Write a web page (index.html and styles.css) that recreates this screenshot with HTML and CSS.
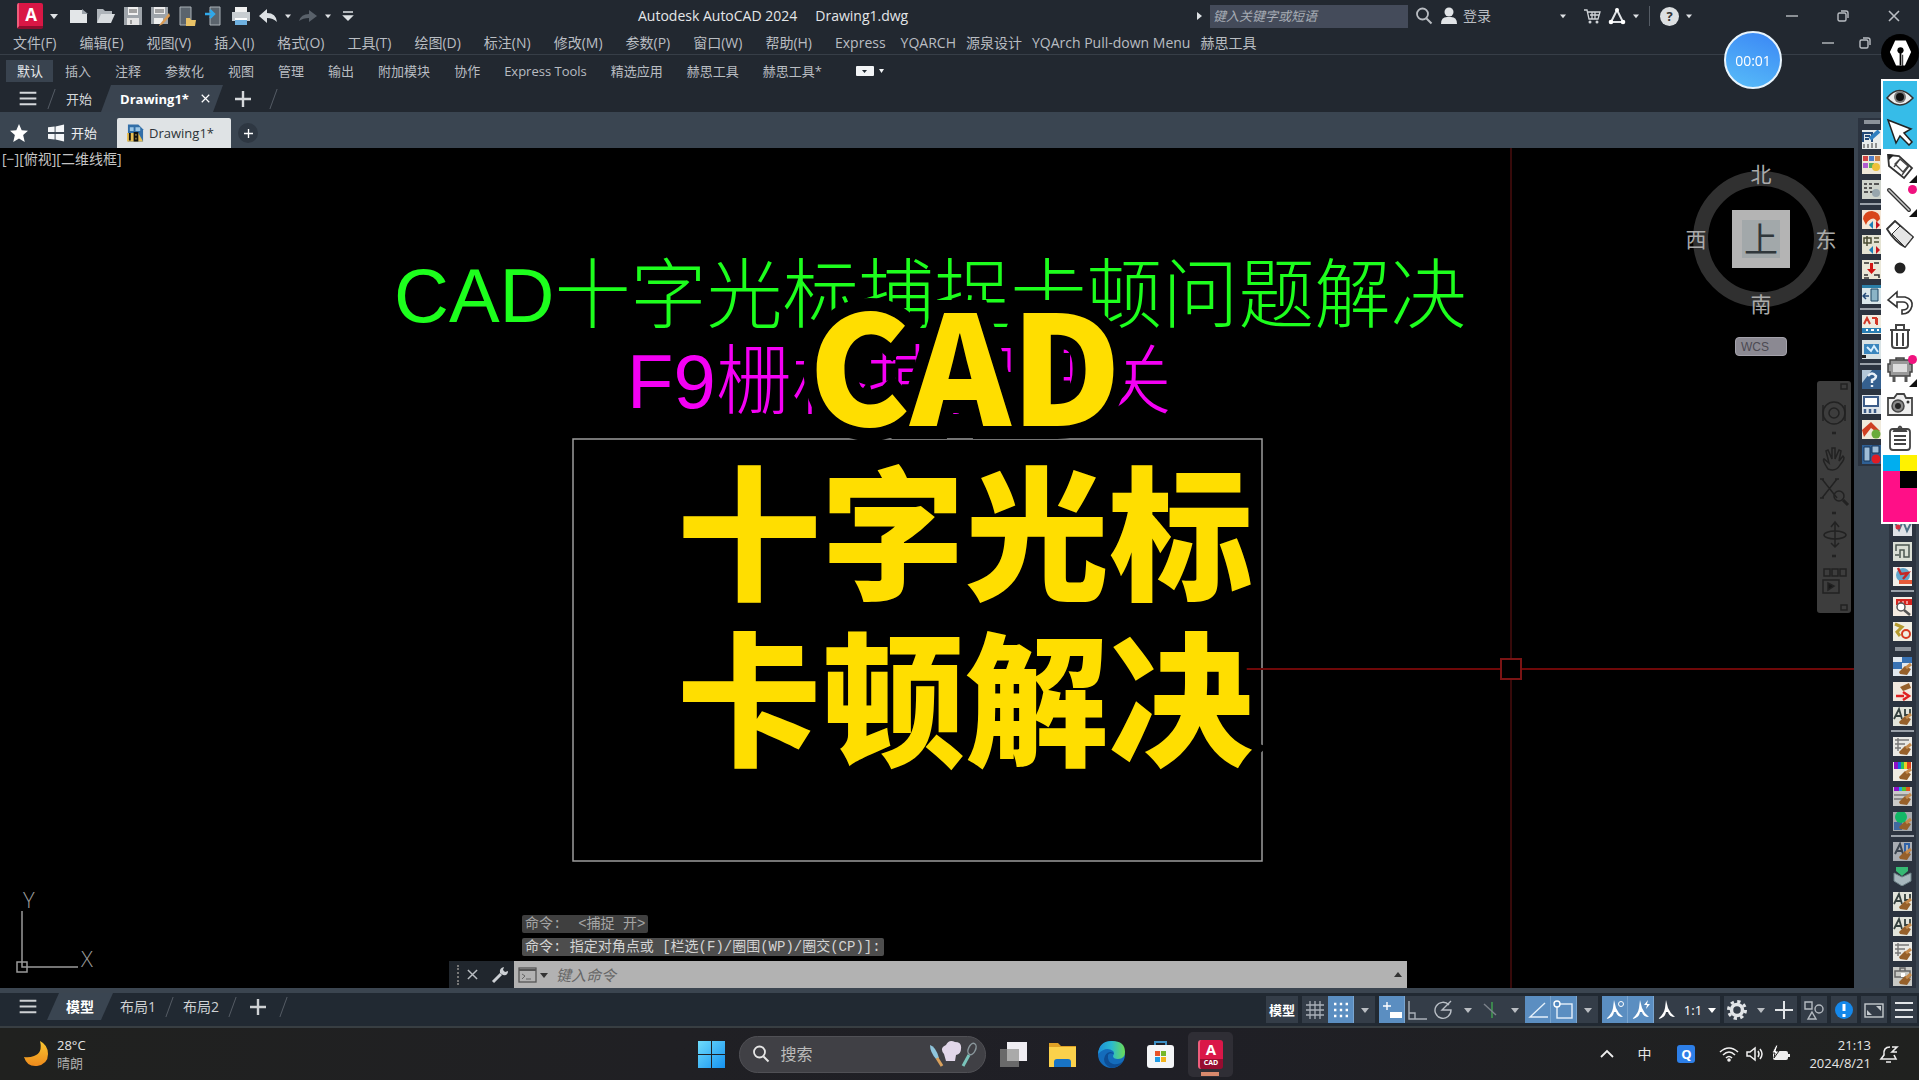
FILE: index.html
```html
<!DOCTYPE html>
<html lang="zh-CN">
<head>
  <meta charset="UTF-8">
  <meta name="viewport" content="width=device-width, initial-scale=1.0">
  <title>Autodesk AutoCAD 2024 - Drawing1.dwg</title>
  <link rel="stylesheet" href="styles.css">
</head>
<body>
  <!-- 图标库 -->
  <svg class="sprite" aria-hidden="true">
    <symbol id="i-down" viewBox="0 0 8 8"><path d="M0 2h8L4 7z" fill="currentColor"/></symbol>
    <symbol id="i-menu" viewBox="0 0 20 18"><path d="M0 2h20M0 9h20M0 16h20" stroke="currentColor" stroke-width="2.4"/></symbol>
    <symbol id="i-plus" viewBox="0 0 16 16"><path d="M8 0v16M0 8h16" stroke="currentColor" stroke-width="2.4"/></symbol>
    <symbol id="i-close" viewBox="0 0 12 12"><path d="M1 1l10 10M11 1L1 11" stroke="currentColor" stroke-width="1.6"/></symbol>
    <symbol id="i-min" viewBox="0 0 12 12"><path d="M0 6h12" stroke="currentColor" stroke-width="1.4"/></symbol>
    <symbol id="i-restore" viewBox="0 0 12 12"><rect x="1" y="3" width="8" height="8" rx="1.5" fill="none" stroke="currentColor" stroke-width="1.4"/><path d="M4 1h5a2 2 0 012 2v5" fill="none" stroke="currentColor" stroke-width="1.4"/></symbol>
    <symbol id="i-search" viewBox="0 0 18 18"><circle cx="7.500" cy="7" r="5.500" fill="none" stroke="currentColor" stroke-width="1.800"/><path d="M11.500 11.500l5 5" stroke="currentColor" stroke-width="2"/></symbol>
    <!-- 右侧工具栏的小图标 -->
    <symbol id="t-edit" viewBox="0 0 19 19"><rect width="19" height="19" fill="#e8ecec"/><path d="M1 12V3h9v9M3 6h5M3 9h4" fill="none" stroke="#244a78" stroke-width="2"/><path d="M8 9L17 1" stroke="#2f7fc0" stroke-width="4"/><path d="M2 14v4M6 14v4M10 13v5M14 13v5" stroke="#333"/></symbol>
    <symbol id="t-palette" viewBox="0 0 19 19"><rect width="19" height="19" fill="#eee8d8"/><path d="M1 1h5v5H1z" fill="#d04646"/><path d="M7 1h5v5H7z" fill="#4b7cc9"/><path d="M13 1h5v5h-5z" fill="#c9824b"/><path d="M1 8h5v5H1z" fill="#b05ccf"/><path d="M7 8h5v5H7z" fill="#59b15c"/><circle cx="14" cy="12" r="4" fill="#edc13a"/></symbol>
    <symbol id="t-table" viewBox="0 0 19 19"><rect width="19" height="19" fill="#cfd4cc"/><path d="M2 4h3M7 4h3M12 4h5M2 8h3M7 8h3M2 12h4M8 12h3" stroke="#555" stroke-width="2"/><circle cx="14" cy="13" r="4" fill="#98a6ad"/></symbol>
    <symbol id="t-face" viewBox="0 0 19 19"><rect width="19" height="19" fill="#f3e6d6"/><path d="M1 9q1-8 9-8 8 1 8 8l-3 3q-2-5-6-3t-5 6z" fill="#d8461b"/><path d="M7 15l4-4v8z" fill="#1d7fb8"/><path d="M18 15l-4-4v8z" fill="#c81420"/></symbol>
    <symbol id="t-swap" viewBox="0 0 19 19"><rect width="19" height="19" fill="#e4e3d3"/><path d="M2 3h7v5H2zM5 1v10M12 3h5M12 7h5" fill="none" stroke="#4a4d35" stroke-width="1.500"/><path d="M7 15l4-4v8z" fill="#1d7fb8"/><path d="M18 15l-4-4v8z" fill="#c81420"/></symbol>
    <symbol id="t-down" viewBox="0 0 19 19"><rect width="19" height="19" fill="#eae7d8"/><path d="M2 3h5M12 3h5M2 15h4M2 18h5M12 15h5v3" stroke="#333" fill="none" stroke-width="1.500"/><path d="M8 3h3v6h3l-4.500 5L5 9h3z" fill="#d21414"/></symbol>
    <symbol id="t-door" viewBox="0 0 19 19"><rect width="19" height="19" fill="#dbe7ea"/><path d="M0 0h19v3H0z" fill="#2a7fa8"/><path d="M9 4h7v12H9z" fill="#8bb4c6" stroke="#1e4763"/><path d="M1 11h6M4 8l-3 3 3 3" fill="none" stroke="#244a78" stroke-width="1.500"/></symbol>
    <symbol id="t-red" viewBox="0 0 19 19"><rect width="19" height="19" fill="#f0ece0"/><path d="M2 9l3-6 3 6M10 3h4v6M15 3v7" fill="none" stroke="#d23a2a" stroke-width="2"/><path d="M0 13h19v5H0z" fill="#2a7fb4"/><path d="M4 15h2M9 15h3M15 15h2" stroke="#fff" stroke-width="2"/></symbol>
    <symbol id="t-pic" viewBox="0 0 19 19"><rect width="19" height="19" fill="#d8e2e4"/><rect x="2" y="4" width="15" height="10" fill="#3a86bd"/><path d="M5 7l4 4 3-5 4 6" stroke="#d8f0ff" fill="none" stroke-width="2"/><path d="M0 15h4v3H0z" fill="#222"/></symbol>
    <symbol id="t-help" viewBox="0 0 19 19"><rect width="19" height="19" fill="#35608f"/><path d="M0 0h10L0 13z" fill="#b3c7d8"/><path d="M6 6q4-5 8 0 0 3-4 4v3M10 15v2" fill="none" stroke="#e8f0f8" stroke-width="2.400"/></symbol>
    <symbol id="t-save" viewBox="0 0 19 19"><rect width="19" height="19" fill="#dfe5ea"/><path d="M2 2h14v9H2z" fill="#fff" stroke="#3d5c88" stroke-width="2"/><path d="M3 14v4M8 14v4M13 14v4" stroke="#3d5c88" stroke-width="2.500"/></symbol>
    <symbol id="t-house" viewBox="0 0 19 19"><rect width="19" height="19" fill="#f0eadb"/><path d="M0 10L9 2l9 9h-5L9 8l-7 9z" fill="#cf3f22"/><circle cx="14" cy="14" r="4.500" fill="#69ab3b"/></symbol>
    <symbol id="t-rec" viewBox="0 0 19 19"><rect width="19" height="19" fill="#2f5f93"/><path d="M2 2h6v14H2zM10 1h7v7h-7z" fill="#9fbdd7" stroke="#17365a"/><circle cx="14" cy="14" r="4.500" fill="#e01c24"/></symbol>
    <symbol id="t-wave" viewBox="0 0 19 19"><rect width="19" height="19" fill="#dfe2e6"/><path d="M1 4l5 9 4-9 4 10 4-8" fill="none" stroke="#4e7086" stroke-width="2"/><circle cx="5" cy="10" r="2.500" fill="#d62d3c"/></symbol>
    <symbol id="t-maze" viewBox="0 0 19 19"><rect width="19" height="19" fill="#dadfd5"/><path d="M3 9V3h13v12h-5V8H7v8M2 13h4" fill="none" stroke="#4b5750" stroke-width="1.500"/></symbol>
    <symbol id="t-globe" viewBox="0 0 19 19"><rect width="19" height="19" fill="#f1efea"/><circle cx="10" cy="8" r="7" fill="#62a6cb"/><path d="M5 1l3 6 7-1-5 6" fill="none" stroke="#c62626" stroke-width="2.500"/><path d="M6 13h13v4H6z" fill="#e45a3a"/></symbol>
    <symbol id="t-com" viewBox="0 0 19 19"><rect width="19" height="19" fill="#f4ece2"/><path d="M3 2h16v6H3z" fill="#d5241f"/><path d="M6 4v3M10 4v3M14 4v3" stroke="#fff"/><circle cx="8" cy="10" r="4" fill="#fff" stroke="#555" stroke-width="1.500"/><path d="M11 13l6 5" stroke="#555" stroke-width="2.500"/></symbol>
    <symbol id="t-loop" viewBox="0 0 19 19"><rect width="19" height="19" fill="#f0eee2"/><path d="M2 2l7 3-5 5 3 4" fill="none" stroke="#b59b2f" stroke-width="3"/><circle cx="13" cy="12" r="4" fill="none" stroke="#d63a20" stroke-width="2"/></symbol>
    <symbol id="t-brush" viewBox="0 0 19 19"><path d="M6 15l6-6 6 3-4 6-7-1z" fill="#96602a"/><path d="M13 11l5-4" stroke="#c58a4b" stroke-width="3"/></symbol>
    <symbol id="t-blue" viewBox="0 0 19 19"><rect width="19" height="19" fill="#e1e8ee"/><path d="M0 5h9v7H0zM9 0h10v6H9z" fill="#3872b3"/><use href="#t-brush"/></symbol>
    <symbol id="t-arrow" viewBox="0 0 19 19"><rect width="19" height="19" fill="#f1e8de"/><path d="M7 5l9-4 2 5-8 3z" fill="#96602a"/><path d="M3 14h8M10 10l6 4-6 4" stroke="#e02020" fill="none" stroke-width="2.500"/></symbol>
    <symbol id="t-text" viewBox="0 0 19 19"><rect width="19" height="19" fill="#e2e4db"/><path d="M1 12L6 2l3 10M3 9h5M12 2v6h5V2" fill="none" stroke="#35413f" stroke-width="1.800"/><use href="#t-brush"/></symbol>
    <symbol id="t-list" viewBox="0 0 19 19"><rect width="19" height="19" fill="#e8e8e4"/><path d="M2 3h14M2 7h10M2 11h6M5 1v13" stroke="#777" stroke-width="1.400"/><use href="#t-brush"/></symbol>
    <symbol id="t-rainbow" viewBox="0 0 19 19"><rect width="19" height="19" fill="#efece2"/><path d="M1 0h4v7H1z" fill="#8c11c8"/><path d="M5 0h3v7H5z" fill="#1769e0"/><path d="M8 0h3v7H8z" fill="#2bc25b"/><path d="M11 0h3v7h-3z" fill="#e7cf27"/><path d="M14 0h4v7h-4z" fill="#e0471e"/><use href="#t-brush"/></symbol>
    <symbol id="t-rainbow-list" viewBox="0 0 19 19"><rect width="19" height="19" fill="#c9cac8"/><path d="M1 0h5v4H1z" fill="#8c11c8"/><path d="M6 0h3v4H6z" fill="#1aa7e0"/><path d="M9 0h4v4H9z" fill="#58c22b"/><path d="M13 0h4v4h-4z" fill="#e0571e"/><path d="M1 8h15M1 12h10" stroke="#777" stroke-width="1.500"/><use href="#t-brush"/></symbol>
    <symbol id="t-green" viewBox="0 0 19 19"><rect width="19" height="19" fill="#a4a9ad"/><path d="M1 10h8v8H1z" fill="#4069a0"/><use href="#t-brush"/><circle cx="8" cy="5" r="6" fill="#12b866"/></symbol>
    <symbol id="t-ab" viewBox="0 0 19 19"><rect width="19" height="19" fill="#a9adb3"/><path d="M2 12L7 2l3 10M4 9h5" fill="none" stroke="#3c4550" stroke-width="2"/><path d="M12 2h4v8h-4z" fill="none" stroke="#2f62a8" stroke-width="2"/><use href="#t-brush"/></symbol>
    <symbol id="t-cube" viewBox="0 0 19 19"><path d="M1 6l8 4 9-4v8l-9 5-8-5z" fill="#a7b7bd" stroke="#6d8287"/><path d="M3 0h12v4l-6 5-6-5z" fill="#36b973"/></symbol>
    <symbol id="t-case" viewBox="0 0 19 19"><rect width="19" height="19" fill="#c8c9c5"/><path d="M2 4h15v6H2zM7 4V1h5v3" fill="none" stroke="#666" stroke-width="1.500"/><path d="M8 6h4v4H8z" fill="#fff"/><use href="#t-brush"/></symbol>
    <!-- 注释监控 -->
    <symbol id="s-anno" viewBox="0 0 26 26"><path d="M12 3l2 8q2 5 7 9-6 0-7-5h-2q-1 6-8 7 6-5 7-11z" fill="#fff"/></symbol>
  </svg>

  <header class="titlebar">
    <div class="quick">
      <button class="logo" aria-label="应用程序菜单">A</button>
      <svg class="tri"><use href="#i-down"/></svg>
      <button aria-label="新建"><svg viewBox="0 0 20 20"><path d="M1 4h12l5 4v9H1z" fill="#e3e6e8"/><path d="M13 3v5h6z" fill="#9da4ab"/></svg></button>
      <button aria-label="打开"><svg viewBox="0 0 20 20"><path d="M1 17V3h6l2 2h7v4" fill="#aeb4ba"/><path d="M1 17L5 8h14l-4 9z" fill="#d8dcdf"/></svg></button>
      <button aria-label="保存"><svg viewBox="0 0 20 20"><path d="M1 1h18v18H1z" fill="#9ea4aa"/><path d="M5 1h10v8H5z" fill="#f0f0f0"/><path d="M4 12h12v7H4z" fill="#e4e4e4"/><path d="M6 4h8M6 6h8M8 14v4" stroke="#555"/></svg></button>
      <button aria-label="另存为"><svg viewBox="0 0 20 20"><path d="M1 1h17v17H1z" fill="#9ea4aa"/><path d="M4 1h11v7H4zM4 12h9v6H4z" fill="#eee"/><path d="M5 4h9M5 6h9" stroke="#555"/><path d="M19 7l-9 11-1 2 4-2 7-8z" fill="#d99b54"/></svg></button>
      <button aria-label="从移动设备打开"><svg viewBox="0 0 20 20"><path d="M3 1h11v18H3z" fill="#5b646d" stroke="#aab1b7"/><path d="M9 12h4l1 2h5l-1 6H9z" fill="#e9c266"/></svg></button>
      <button aria-label="保存到移动设备"><svg viewBox="0 0 20 20"><path d="M6 1h10v18H6z" fill="#5b646d" stroke="#aab1b7"/><path d="M1 8h8M6 4l4 4-4 4" fill="none" stroke="#2fa8ea" stroke-width="2.400"/></svg></button>
      <button aria-label="打印"><svg viewBox="0 0 20 20"><path d="M4 1h12v6H4z" fill="#f0f0f0"/><path d="M1 6h18v9H1z" fill="#c8cdd1"/><path d="M4 12h12v7H4z" fill="#6fb1e0"/><path d="M4 12h12v2H4z" fill="#fff"/></svg></button>
      <button aria-label="放弃"><svg viewBox="0 0 20 20"><path d="M1 10l8-7v4q9 0 10 9-4-4-10-4v5z" fill="#dde1e4"/></svg></button>
      <svg class="tri small"><use href="#i-down"/></svg>
      <button aria-label="重做"><svg viewBox="0 0 20 20"><path d="M19 10l-8-6v4Q3 8 1 15q4-3 10-3v4z" fill="#59616a"/></svg></button>
      <svg class="tri small"><use href="#i-down"/></svg>
      <button aria-label="自定义快速访问工具栏"><svg viewBox="0 0 20 20"><path d="M5 6h10M6 10h8l-4 4z" fill="#dde1e4" stroke="#dde1e4" stroke-width="1.500"/></svg></button>
    </div>
    <h1 class="caption"><span>Autodesk AutoCAD 2024</span><span>Drawing1.dwg</span></h1>
    <div class="infocenter">
      <svg class="tri right"><use href="#i-down"/></svg>
      <input class="help-search" type="text" placeholder="键入关键字或短语" aria-label="键入关键字或短语">
      <button aria-label="搜索"><svg><use href="#i-search"/></svg></button>
      <button class="login"><svg viewBox="0 0 18 18"><circle cx="9" cy="5" r="4.500" fill="#e1e4e7"/><path d="M1 17q0-7 6-7h4q6 0 6 7z" fill="#e1e4e7"/></svg>登录</button>
      <svg class="tri small login-more"><use href="#i-down"/></svg>
      <button aria-label="购物车"><svg viewBox="0 0 18 18"><path d="M1 3h3l2 9h9l2-7H5M7 8h9M9 5v7M12 5v7" fill="none" stroke="#cfd3d7" stroke-width="1.300"/><circle cx="7" cy="15" r="1.500" fill="#cfd3d7"/><circle cx="14" cy="15" r="1.500" fill="#cfd3d7"/></svg></button>
      <button aria-label="Autodesk App Store"><svg viewBox="0 0 18 18"><path d="M9 3L3 15h12z" fill="none" stroke="#e1e4e7" stroke-width="2"/><circle cx="9" cy="3" r="2" fill="#fff"/><circle cx="3" cy="15" r="2.300" fill="#fff"/><circle cx="15" cy="15" r="2.300" fill="#fff"/></svg></button>
      <svg class="tri small"><use href="#i-down"/></svg>
      <i class="rule"></i>
      <button class="help" aria-label="帮助">?</button>
      <svg class="tri small"><use href="#i-down"/></svg>
    </div>
    <div class="win-controls">
      <button aria-label="最小化"><svg><use href="#i-min"/></svg></button>
      <button aria-label="还原"><svg><use href="#i-restore"/></svg></button>
      <button aria-label="关闭"><svg><use href="#i-close"/></svg></button>
    </div>
  </header>

  <nav class="menubar">
    <button>文件(F)</button><button>编辑(E)</button><button>视图(V)</button><button>插入(I)</button><button>格式(O)</button><button>工具(T)</button><button>绘图(D)</button><button>标注(N)</button><button>修改(M)</button><button>参数(P)</button><button>窗口(W)</button><button>帮助(H)</button><button>Express</button>
    <div class="plugins"><button>YQARCH</button><button>源泉设计</button><button>YQArch Pull-down Menu</button><button>赫思工具</button></div>
    <div class="doc-controls">
      <button aria-label="最小化图形"><svg><use href="#i-min"/></svg></button>
      <button aria-label="还原图形"><svg><use href="#i-restore"/></svg></button>
    </div>
  </nav>

  <nav class="ribbon">
    <button class="active">默认</button><button>插入</button><button>注释</button><button>参数化</button><button>视图</button><button>管理</button><button>输出</button><button>附加模块</button><button>协作</button><button>Express Tools</button><button>精选应用</button><button>赫思工具</button><button>赫思工具*</button>
    <button class="ribbon-toggle" aria-label="最小化功能区"><svg viewBox="0 0 28 10"><rect width="18" height="10" rx="1" fill="#f2f4f6"/><path d="M6 4h5L8.500 7z" fill="#222b33"/><path d="M23 3h5l-2.500 4z" fill="#f2f4f6"/></svg></button>
  </nav>

  <nav class="file-tabs">
    <button class="burger" aria-label="文件选项卡菜单"><svg><use href="#i-menu"/></svg></button>
    <i class="slash"></i>
    <button class="start">开始</button>
    <div class="file-tab"><button>Drawing1*</button><button class="x" aria-label="关闭"><svg><use href="#i-close"/></svg></button></div>
    <button class="add" aria-label="新图形"><svg><use href="#i-plus"/></svg></button>
    <i class="slash"></i>
  </nav>

  <main class="workspace">
    <div class="editor">
      <nav class="doc-tabs">
        <button class="star" aria-label="收藏"><svg viewBox="0 0 20 20"><path d="M10 0l3 7 7 .6-5.400 4.700L16.400 20 10 16l-6.400 4 1.800-7.700L0 7.600 7 7z" fill="#fff"/></svg></button>
        <button class="home"><svg viewBox="0 0 18 18"><path d="M0 3l7-1v6H0zM8 2l9-2v8H8zM0 10h7v6l-7-1zM8 10h9v8l-9-2z" fill="#f4f6f8"/></svg>开始</button>
        <button class="doc-tab"><svg viewBox="0 0 18 18"><path d="M1 0h11l5 5v13H1z" fill="#326fa8"/><path d="M3 3h4v4H3zM9 3h5v4H9z" fill="#9cc7e6"/><path d="M0 9h12l5 9H0z" fill="#e8bf54"/><path d="M3 9v8M8 9h3v8H8zM8 13h3" fill="none" stroke="#111" stroke-width="2"/></svg>Drawing1*</button>
        <button class="doc-add" aria-label="新建"><svg><use href="#i-plus"/></svg></button>
      </nav>

      <section class="canvas">
        <div class="viewport-label">[−][俯视][二维线框]</div>
        <div class="note green">CAD十字光标捕捉卡顿问题解决</div>
        <div class="note magenta">F9栅格捕捉开关</div>
        <svg class="drawing" aria-hidden="true">
          <rect x="573" y="291" width="689" height="422" fill="none" stroke="#9c9c9c" stroke-width="1.500"/>
          <path d="M1511 0v511M1511 532v308" stroke="#4a0e0e" stroke-width="1.500"/>
          <path d="M1245 521h256M1522 521h600" stroke="#6e0808" stroke-width="2"/>
          <rect x="1501" y="511" width="20" height="20" fill="none" stroke="#7a1414" stroke-width="2"/>
          <g fill="none" stroke="#9a9a9a" stroke-width="1.500"><path d="M22 763v56h56"/><rect x="17" y="814" width="10" height="10"/></g>
          <g class="ucs"><text x="23" y="760">Y</text><text x="81" y="819">X</text></g>
        </svg>

        <div class="viewcube">
          <span class="n">北</span><span class="w">西</span><button class="top">上</button><span class="e">东</span><span class="s">南</span>
        </div>
        <button class="wcs">WCS</button>
        <div class="navbar">
          <svg viewBox="0 0 34 232" fill="none" stroke="#222" stroke-width="1.500">
            <circle cx="17" cy="32" r="11"/><circle cx="17" cy="32" r="5"/><path d="M6 24v16M28 24v16"/>
            <path d="M11 88q-6-9-4-10l5 4-3-12 2-1 4 9v-11h3v11l4-9 2 1-2 10 4-5q3 2-3 9-4 7-12 4z"/>
            <path d="M5 98l15 19M20 98L5 117M3 98h4M18 98h4M3 117h4"/><circle cx="22" cy="115" r="5"/><path d="M26 119l5 5" stroke-width="3"/>
            <ellipse cx="18" cy="154" rx="11" ry="4"/><path d="M18 142v24M14 146l4-5 4 5M14 162l4 4 4-4"/>
            <path d="M7 188h6v7H7zM15 188h6v7h-6zM23 188h6v7h-6zM6 199h16v13H6z"/><path d="M11 202v7l6-4z" fill="#181818"/>
            <path d="M15 52h4M15 132h4M15 175h4" stroke-width="2.500"/><path d="M24 3h6v5h-6zM24 224h6v5h-6z"/>
          </svg>
        </div>

        <div class="headline"><strong>CAD</strong><span>十字光标</span><span>卡顿解决</span></div>

        <div class="command">
          <output>命令: &nbsp;&lt;捕捉 开&gt;</output>
          <output>命令: 指定对角点或 [栏选(F)/圈围(WP)/圈交(CP)]:</output>
          <div class="command-row">
            <i class="grip"></i>
            <button aria-label="关闭"><svg class="cx"><use href="#i-close"/></svg></button>
            <button aria-label="自定义"><svg class="wrench" viewBox="0 0 18 18"><path d="M2 16l8-8" stroke="#ccd0d4" stroke-width="3"/><path d="M13 1q-5 1-4 6l3 2q5 1 5-4l-3 1-2-2z" fill="#ccd0d4"/></svg></button>
            <div class="command-box">
              <svg viewBox="0 0 30 18"><rect x="1" y="2" width="17" height="14" fill="none" stroke="#555" stroke-width="1.300"/><path d="M1 3h17v2H1z" fill="#555"/><path d="M4 8l3 2-3 3M8 13h5" fill="none" stroke="#666"/><path d="M22 7h8l-4 5z" fill="#333"/></svg>
              <input type="text" placeholder="键入命令" aria-label="键入命令">
              <svg class="tri up"><use href="#i-down"/></svg>
            </div>
          </div>
        </div>
      </section>
    </div>

    <aside class="dock">
      <div class="tools first">
        <i class="handle"></i>
        <svg><use href="#t-edit"/></svg><svg><use href="#t-palette"/></svg><svg><use href="#t-table"/></svg><hr>
        <svg><use href="#t-face"/></svg><svg><use href="#t-swap"/></svg><svg><use href="#t-down"/></svg><svg><use href="#t-door"/></svg><hr>
        <svg><use href="#t-red"/></svg><svg><use href="#t-pic"/></svg><hr>
        <svg><use href="#t-help"/></svg><svg><use href="#t-save"/></svg><svg><use href="#t-house"/></svg><svg><use href="#t-rec"/></svg>
      </div>
      <div class="tools second">
        <svg><use href="#t-wave"/></svg><svg><use href="#t-maze"/></svg><svg><use href="#t-globe"/></svg><hr>
        <svg><use href="#t-com"/></svg><svg><use href="#t-loop"/></svg><i class="handle"></i>
        <svg><use href="#t-blue"/></svg><svg><use href="#t-arrow"/></svg><svg><use href="#t-text"/></svg><hr>
        <svg><use href="#t-list"/></svg><svg><use href="#t-rainbow"/></svg><svg><use href="#t-rainbow-list"/></svg><svg><use href="#t-green"/></svg><hr>
        <svg><use href="#t-ab"/></svg><svg><use href="#t-cube"/></svg><svg><use href="#t-text"/></svg><svg><use href="#t-text"/></svg><svg><use href="#t-list"/></svg><svg><use href="#t-case"/></svg>
      </div>
    </aside>
  </main>

  <footer class="statusbar">
    <div class="layouts">
      <button class="burger" aria-label="布局菜单"><svg><use href="#i-menu"/></svg></button>
      <button class="model">模型</button>
      <button class="layout">布局1</button><i class="slash"></i>
      <button class="layout">布局2</button><i class="slash"></i>
      <button class="add" aria-label="新建布局"><svg><use href="#i-plus"/></svg></button><i class="slash"></i>
    </div>
    <div class="toggles">
      <div class="group"><button class="label">模型</button></div>
      <div class="group">
        <button aria-label="栅格"><svg viewBox="0 0 26 26"><path d="M8 4v18M13 4v18M18 4v18M4 8h18M4 13h18M4 18h18" stroke="#a9b0b8" stroke-width="1.300"/></svg></button>
        <button class="on" aria-label="捕捉模式"><svg viewBox="0 0 26 26"><path d="M6 7h14M6 13h14M6 19h14" stroke="#fff" stroke-width="2.400" stroke-dasharray="2.400 3.400"/></svg></button>
        <button class="more" aria-label="捕捉设置"><svg><use href="#i-down"/></svg></button>
      </div>
      <div class="group">
        <button class="on" aria-label="动态输入"><svg viewBox="0 0 26 26"><path d="M4 9h8M8 5v8" stroke="#fff" stroke-width="1.400"/><path d="M11 15h12v6H11z" fill="#fff"/></svg></button>
        <button aria-label="正交"><svg viewBox="0 0 26 26"><path d="M4 4v18h18M4 16h6v6" fill="none" stroke="#a9b0b8" stroke-width="1.400"/></svg></button>
        <button aria-label="极轴追踪"><svg viewBox="0 0 26 26"><path d="M18 8a8 8 0 102 5H11l9-9" fill="none" stroke="#b9bfc6" stroke-width="1.400"/></svg></button>
        <button class="more" aria-label="极轴设置"><svg><use href="#i-down"/></svg></button>
        <button aria-label="等轴测草图"><svg viewBox="0 0 26 26"><path d="M14 5v16" stroke="#3f9950" stroke-width="1.600"/><path d="M6 7l12 11" stroke="#7c838b" stroke-width="1.400"/></svg></button>
        <button class="more" aria-label="等轴测设置"><svg><use href="#i-down"/></svg></button>
        <button class="on" aria-label="对象捕捉追踪"><svg viewBox="0 0 26 26"><path d="M20 6L5 20h18" fill="none" stroke="#e5f0fa" stroke-width="1.400"/></svg></button>
        <button class="on" aria-label="对象捕捉"><svg viewBox="0 0 26 26"><rect x="6" y="7" width="15" height="14" fill="none" stroke="#e5f0fa" stroke-width="1.400"/><circle cx="6" cy="7" r="3" fill="#5288bf" stroke="#fff" stroke-width="1.400"/></svg></button>
        <button class="more" aria-label="对象捕捉设置"><svg><use href="#i-down"/></svg></button>
      </div>
      <div class="group">
        <button class="on" aria-label="注释可见性"><svg viewBox="0 0 26 26"><use href="#s-anno"/><circle cx="19" cy="7" r="2.500" fill="none" stroke="#fff"/></svg></button>
        <button class="on" aria-label="自动缩放"><svg viewBox="0 0 26 26"><use href="#s-anno"/><path d="M20 3l-4 5h3l-1 4 4-5h-3z" fill="#fff"/></svg></button>
        <button aria-label="注释比例"><svg><use href="#s-anno"/></svg></button>
        <button class="scale">1:1<svg><use href="#i-down"/></svg></button>
      </div>
      <div class="group">
        <button aria-label="切换工作空间"><svg viewBox="0 0 26 26"><circle cx="13" cy="13" r="5.500" fill="none" stroke="#e2e5e8" stroke-width="3.500"/><circle cx="13" cy="13" r="8.500" fill="none" stroke="#e2e5e8" stroke-width="3" stroke-dasharray="3.300 3.370"/></svg></button>
        <button class="more" aria-label="工作空间列表"><svg><use href="#i-down"/></svg></button>
        <button aria-label="注释监视器"><svg viewBox="0 0 26 26"><path d="M13 4v18M4 13h18" stroke="#e2e5e8" stroke-width="2"/></svg></button>
      </div>
      <div class="group"><button aria-label="隔离对象"><svg viewBox="0 0 26 26" fill="none" stroke="#b4bac0" stroke-width="1.400"><path d="M4 5h7v7H4z"/><circle cx="18" cy="12" r="4"/><path d="M11 15l4 7H7z"/></svg></button></div>
      <div class="group"><button aria-label="硬件加速"><svg viewBox="0 0 26 26"><circle cx="13" cy="13" r="9" fill="#1588ea"/><path d="M13 7v7M13 17v3" stroke="#fff" stroke-width="3"/></svg></button></div>
      <div class="group"><button aria-label="全屏显示"><svg viewBox="0 0 26 26"><rect x="4" y="7" width="18" height="13" fill="none" stroke="#c5cace" stroke-width="1.400"/><path d="M15 9h5v5zM6 13v5h5z" fill="#c5cace"/></svg></button></div>
      <div class="group"><button aria-label="自定义"><svg viewBox="0 0 26 26"><path d="M4 6h18M4 13h18M4 20h18" stroke="#e2e5e8" stroke-width="2.200"/></svg></button></div>
    </div>
  </footer>

  <div class="taskbar">
    <button class="weather">
      <svg viewBox="0 0 26 26"><defs><linearGradient id="moon" x2="0" y2="1"><stop stop-color="#f8c630"/><stop offset="1" stop-color="#ee8a1c"/></linearGradient></defs><path d="M17 0q3 12-6 15-5 2-10 1 3 10 13 9 11-2 11-12 0-9-8-13z" fill="url(#moon)"/></svg>
      <span>28°C<small>晴朗</small></span>
    </button>
    <div class="apps">
      <button aria-label="开始"><svg viewBox="0 0 27 27"><defs><linearGradient id="win" x2="1" y2="1"><stop stop-color="#6fdcfb"/><stop offset="1" stop-color="#1592f0"/></linearGradient></defs><path d="M0 0h13v13H0zM14 0h13v13H14zM0 14h13v13H0zM14 14h13v13H14z" fill="url(#win)"/></svg></button>
      <label class="task-search">
        <svg class="lens"><use href="#i-search"/></svg>
        <input type="text" placeholder="搜索" aria-label="搜索">
        <svg class="chef" viewBox="0 0 48 28"><path d="M1 5q6 2 9 13l-3 1Q1 12 1 5z" fill="#8fc5dc"/><path d="M8 18l5 8" stroke="#d9a05c" stroke-width="3"/><path d="M15 14q-5-6 2-9 3-6 9-3 7 0 6 7 0 5-5 6l-1 6H17z" fill="#e2d7ea"/><ellipse cx="43" cy="9" rx="3.500" ry="6" transform="rotate(25 43 9)" fill="none" stroke="#8a979c" stroke-width="1.500"/><path d="M40 15l-6 11" stroke="#7ac4bb" stroke-width="3"/></svg>
      </label>
      <button aria-label="任务视图"><svg viewBox="0 0 27 27"><path d="M7 1h20v19H7z" fill="#efedf2"/><path d="M0 8h19v18H0z" fill="#777" opacity=".85"/><path d="M7 8h12v12H7z" fill="#aaa"/></svg></button>
      <button aria-label="文件资源管理器"><svg viewBox="0 0 27 27"><path d="M0 2h9l3 3h15v21H0z" fill="#dfa126"/><path d="M0 6h27v20H0z" fill="#fbd14b"/><path d="M5 26v-5q0-3 3-3h11q3 0 3 3v5z" fill="#1873c4"/></svg></button>
      <button aria-label="Edge"><svg viewBox="0 0 27 27"><defs><linearGradient id="edge" x2="1"><stop stop-color="#1c8ed8"/><stop offset=".5" stop-color="#2ab9cf"/><stop offset="1" stop-color="#6bdc55"/></linearGradient></defs><circle cx="13.500" cy="13.500" r="13.500" fill="#146cbb"/><path d="M0 13Q1 0 14 0t13 11q0 7-7 7-5 0-5-3 2-3 0-5-7-5-15 3z" fill="url(#edge)"/><path d="M10 14q-1 7 5 9 6 1 10-3-4 7-12 7-7-3-7-9 1-6 6-7 3 0 4 2-5-2-6 1z" fill="#0d4d94"/></svg></button>
      <button aria-label="Microsoft Store"><svg viewBox="0 0 27 27"><path d="M8 5V1h11v4" fill="none" stroke="#3c8fc4" stroke-width="2"/><rect y="4" width="27" height="23" rx="3" fill="#f4f6f8"/><path d="M8 10h5v5H8z" fill="#e8542a"/><path d="M14 10h5v5h-5z" fill="#76b82a"/><path d="M8 16h5v5H8z" fill="#219ce5"/><path d="M14 16h5v5h-5z" fill="#f4b51e"/></svg></button>
      <button class="running" aria-label="AutoCAD"><span>A<small>CAD</small></span></button>
    </div>
    <div class="tray">
      <button aria-label="显示隐藏的图标"><svg viewBox="0 0 20 20"><path d="M4 13l6-6 6 6" fill="none" stroke="#eee" stroke-width="1.800"/></svg></button>
      <button class="ime">中</button>
      <button class="q" aria-label="输入法">Q</button>
      <button class="net" aria-label="网络、音量和电源">
        <svg viewBox="0 0 20 20" fill="none" stroke="#f0f0f0" stroke-width="1.600"><path d="M1 8q9-8 18 0M4 11q6-6 12 0M7 14q3-3 6 0"/><circle cx="10" cy="16" r="1" fill="#fff"/></svg>
        <svg viewBox="0 0 20 20" fill="none" stroke="#f0f0f0" stroke-width="1.500"><path d="M2 8h3l5-4v12l-5-4H2zM13 7q2 3 0 6M15 5q4 5 0 10"/></svg>
        <svg viewBox="0 0 20 20"><rect x="2" y="7" width="15" height="9" rx="2" fill="#eee"/><path d="M17 10h2v3h-2z" fill="#eee"/><path d="M5 1L1 9h3l-1 5 5-7H5l2-6z" fill="#fff" stroke="#202020"/></svg>
      </button>
      <button class="clock">21:13<br>2024/8/21</button>
      <button aria-label="通知"><svg viewBox="0 0 20 20" fill="none" stroke="#eee" stroke-width="1.600"><path d="M11 3Q4 3 5 11l-3 4h15l-2-4M7 18h5M13 3h5l-5 5h5"/></svg></button>
    </div>
  </div>

  <!-- 录屏计时与批注工具 -->
  <div class="timer">00:01</div>
  <div class="pen-badge"><svg viewBox="0 0 26 30"><path d="M7 1h12l6 13-7 15h-2V17h-1v12H8L1 14z" fill="#fff"/><path d="M13 14v15" stroke="#000" stroke-width="2"/><circle cx="13" cy="12" r="3.500" fill="#000"/></svg></div>
  <div class="annotate">
    <button class="picked" aria-label="显示"><svg viewBox="0 0 28 28"><path d="M1 14q12-15 26 0-13 14-26 0z" fill="#eee" stroke="#333" stroke-width="1.500"/><circle cx="14" cy="13" r="6" fill="#777"/><circle cx="14" cy="13" r="4" fill="#111"/></svg></button>
    <button class="picked" aria-label="选择"><svg viewBox="0 0 28 28"><path d="M2 2l23 9-7 4 8 9-3 3-9-9-4 7z" fill="#fff" stroke="#222" stroke-width="1.500"/></svg></button>
    <button class="sub" aria-label="铅笔"><svg viewBox="0 0 28 28"><path d="M2 3l11 1 13 12-8 10L3 14z" fill="#fff" stroke="#333" stroke-width="1.800"/><path d="M2 2l6 1-5 5z" fill="#222"/><path d="M8 15l6-8M9 12l5-5 8 7-5 6zM16 23l7-9" fill="none" stroke="#444" stroke-width="1.300"/></svg></button>
    <button class="sub dot" aria-label="直线"><svg viewBox="0 0 28 28"><path d="M3 4l20 20" stroke="#333" stroke-width="4" stroke-linecap="round"/><path d="M3 4l20 20" stroke="#ccc" stroke-width="1.500" stroke-linecap="round"/></svg></button>
    <button aria-label="橡皮"><svg viewBox="0 0 28 28"><path d="M1 9l8-8 18 16-8 10Q9 22 1 9z" fill="#fff" stroke="#333" stroke-width="1.800"/><path d="M6 14l8-8 13 11-8 10z" fill="#e5e5e5" stroke="#333"/></svg></button>
    <button aria-label="粗细"><svg viewBox="0 0 28 28"><circle cx="14" cy="14" r="5.500" fill="#222"/></svg></button>
    <button aria-label="撤销"><svg viewBox="0 0 28 28"><path d="M2 12l9-8v5h8q8 2 7 9-2 8-10 8v-4q6 0 6-4-1-4-5-4h-6v5z" fill="#fff" stroke="#333" stroke-width="1.600"/></svg></button>
    <button aria-label="清空"><svg viewBox="0 0 28 28" fill="none" stroke="#444" stroke-width="2"><path d="M4 8h20M10 7V3h8v4M6 9v14q0 3 3 3h10q3 0 3-3V9M11 11v13M17 11v13"/></svg></button>
    <button class="sub dot" aria-label="白板"><svg viewBox="0 0 28 28"><path d="M10 4V2h8v2M4 4h20v4h2v8h-2v4H4v-4H2V8h2z" fill="#999" stroke="#444" stroke-width="1.500"/><path d="M7 8h14v8H7z" fill="#ddd"/><path d="M8 20v6M20 20v6" stroke="#555" stroke-width="3"/></svg></button>
    <button aria-label="截图"><svg viewBox="0 0 28 28"><path d="M2 8h6l3-4h7l2 4h6v17H2z" fill="#eee" stroke="#444" stroke-width="1.800"/><circle cx="12" cy="16" r="6" fill="#888" stroke="#444" stroke-width="1.500"/><circle cx="12" cy="16" r="3" fill="#222"/><circle cx="22" cy="12" r="1.500" fill="#333"/></svg></button>
    <button aria-label="剪贴板"><svg viewBox="0 0 28 28" fill="none" stroke="#444" stroke-width="1.800"><rect x="4" y="5" width="20" height="21" rx="3"/><path d="M8 7q1-2 4-2 2-5 4 0 3 0 4 2zM8 12h12M8 16h12M8 20h12"/></svg></button>
    <div class="swatches"><i class="cyan"></i><i class="yellow"></i><i class="black"></i></div>
  </div>
</body>
</html>
```
FILE: styles.css
```css
*,
*::before,
*::after {
  box-sizing: border-box;
}

body {
  margin: 0;
  height: 100vh;
  overflow: hidden;
  display: flex;
  flex-direction: column;
  background: #222830;
  color: #b9bdc2;
  font-family: "Open Sans", "Noto Sans CJK SC", sans-serif;
  font-size: 13px;
  line-height: 18px;
}

button {
  display: flex;
  align-items: center;
  justify-content: center;
  padding: 0;
  border: 0;
  background: none;
  color: inherit;
  font: inherit;
  white-space: nowrap;
  flex: none;
}

input {
  min-width: 0;
  padding: 0;
  border: 0;
  background: none;
  font: inherit;
}

svg {
  display: block;
  flex: none;
}

.sprite {
  position: absolute;
  width: 0;
  height: 0;
}

/* 标题栏 */
.titlebar {
  display: grid;
  grid-template-columns: 621px auto 1fr auto;
  height: 32px;
  padding-left: 17px;
}

.quick {
  display: flex;
  align-items: center;
  gap: 7px;
}

.quick button svg {
  width: 20px;
  height: 20px;
}

.quick .logo {
  width: 26px;
  height: 26px;
  border-bottom: 3px solid #8d0d2d;
  border-left: 2px solid #ef5d7c;
  border-radius: 2px;
  background: #d91745;
  color: #fff;
  font-size: 17px;
  font-weight: 700;
}

.tri {
  width: 8px;
  height: 8px;
  color: #dfe2e5;
}

.quick .tri {
  margin-right: 4px;
}

.quick .tri.small {
  margin-right: 0;
}

.tri.small {
  width: 6px;
  height: 6px;
}

.tri.right {
  transform: rotate(-90deg);
}

.tri.up {
  color: #333;
  transform: rotate(180deg);
}

.caption {
  display: flex;
  align-items: center;
  gap: 18px;
  margin: 0;
  color: #e4e6e8;
  font-size: 14px;
  font-weight: 400;
}

.infocenter {
  display: flex;
  align-items: center;
  justify-self: end;
  gap: 7px;
}

.help-search {
  width: 198px;
  height: 23px;
  padding-left: 3px;
  background: #444b5a;
  color: #ccc;
  font-size: 13px;
  font-style: italic;
}

.help-search::placeholder {
  color: #a6abb4;
}

.infocenter button svg {
  width: 18px;
  height: 18px;
}

.login {
  gap: 5px;
  font-size: 14px;
}

.login-more {
  margin: 0 10px 0 62px;
}

.rule {
  width: 1px;
  height: 20px;
  margin: 0 3px;
  background: #555c65;
}

.help {
  width: 19px;
  height: 19px;
  border-radius: 50%;
  background: #dcdfe1;
  color: #333;
  font-weight: 700;
}

.win-controls {
  display: flex;
  align-items: center;
  margin-left: 74px;
}

.win-controls button {
  width: 51px;
  height: 32px;
}

.win-controls svg,
.doc-controls svg {
  width: 12px;
  height: 12px;
}

/* 菜单 */
.menubar {
  display: flex;
  align-items: center;
  gap: 23px;
  height: 23px;
  padding-left: 13px;
  border-bottom: 1px solid #373e47;
  font-size: 14px;
}

.plugins {
  display: flex;
  gap: 10px;
  margin-left: -8px;
}

.doc-controls {
  display: flex;
  gap: 25px;
  margin-left: auto;
  padding-right: 48px;
}

.ribbon {
  display: flex;
  align-items: center;
  height: 30px;
  padding: 4px 6px 2px;
}

.ribbon button {
  height: 22px;
  padding: 0 12px;
}

.ribbon .active {
  padding: 0 10px 0 11px;
  background: #39434f;
  color: #e8eaec;
}

.ribbon-toggle svg {
  width: 28px;
  height: 10px;
  margin-left: 10px;
}

/* 文件选项卡 */
.file-tabs {
  display: flex;
  align-items: center;
  height: 27px;
  padding-left: 19px;
  color: #d5d8db;
}

.burger svg {
  width: 18px;
  height: 15px;
}

.slash {
  width: 1px;
  height: 20px;
  margin: 0 14px;
  background: #555c65;
  transform: skewX(-20deg);
}

.file-tabs .start {
  margin-right: 9px;
}

.file-tab {
  display: flex;
  align-items: center;
  justify-content: space-between;
  width: 122px;
  height: 27px;
  padding: 0 13px 0 19px;
  background: #3a4450;
  clip-path: polygon(10px 0, 100% 0, 112px 100%, 0 100%);
  color: #fff;
  font-weight: 700;
}

.file-tab .x svg {
  width: 9px;
  height: 9px;
}

.add {
  margin: 0 8px 0 12px;
}

.add svg {
  width: 16px;
  height: 16px;
}

.workspace {
  display: flex;
  flex: 1;
  min-height: 0;
  background: #3a4551;
}

.editor {
  display: flex;
  flex-direction: column;
  flex: 1;
  min-width: 0;
}

.doc-tabs {
  display: flex;
  align-items: center;
  height: 36px;
  padding: 6px 0 0 10px;
  color: #eceef0;
}

.star svg {
  width: 18px;
  height: 18px;
}

.home {
  gap: 6px;
  margin: 0 20px;
}

.home svg,
.doc-tab svg {
  width: 17px;
  height: 18px;
}

.doc-tab {
  gap: 5px;
  height: 30px;
  width: 114px;
  padding-right: 7px;
  border-radius: 2px 2px 0 0;
  background: #dfe3e5;
  color: #2d3338;
}

.doc-add {
  width: 20px;
  height: 20px;
  margin-left: 7px;
  border-radius: 50%;
  background: #2e3742;
  color: #fff;
}

.doc-add svg {
  width: 9px;
  height: 9px;
}

/* 绘图区 */
.canvas {
  position: relative;
  flex: 1;
  overflow: hidden;
  background: #000;
}

.viewport-label {
  padding: 2px;
  color: #c4c4c4;
  font-size: 14px;
}

.drawing {
  position: absolute;
  top: 0;
  left: 0;
  width: 100%;
  height: 100%;
}

.ucs {
  fill: #9a9a9a;
  font-family: "Open Sans", sans-serif;
  font-size: 22px;
  font-weight: 300;
}

.note {
  position: absolute;
  font-family: "Liberation Sans", "Noto Sans CJK SC", sans-serif;
  font-size: 76px;
  font-weight: 300;
  line-height: 86px;
  white-space: nowrap;
}

.green {
  top: 105px;
  left: 394px;
  color: #1dff1d;
}

.magenta {
  top: 191px;
  left: 627px;
  color: #f400f4;
}

.headline {
  position: absolute;
  top: 129px;
  left: 677px;
  display: flex;
  flex-direction: column;
  align-items: center;
  color: #ffde00;
  font-family: "Noto Sans CJK SC", sans-serif;
  font-size: 144px;
  font-weight: 900;
  line-height: 166px;
  paint-order: stroke fill;
  -webkit-text-stroke: 16px #000;
}

.headline strong {
  font-size: 152px;
  font-weight: 900;
  -webkit-text-stroke-width: 26px;
}

.viewcube {
  position: absolute;
  top: 14px;
  right: 16px;
  display: grid;
  grid-template: 24px 106px 24px / 24px 106px 24px;
  place-items: center;
  color: #aaa;
  font-size: 21px;
}

.viewcube::before {
  content: "";
  grid-area: 1 / 1 / 4 / 4;
  width: 136px;
  height: 136px;
  border: 15px solid #303030;
  border-radius: 50%;
}

.viewcube .n { grid-area: 1 / 2; }
.viewcube .w { grid-area: 2 / 1; }
.viewcube .e { grid-area: 2 / 3; }
.viewcube .s { grid-area: 3 / 2; }

.viewcube .top {
  grid-area: 2 / 2;
  width: 58px;
  height: 58px;
  border: 10px solid #b4b4b4;
  background: #a2a8aa;
  color: #30373b;
  font-size: 34px;
}

.wcs {
  position: absolute;
  top: 189px;
  right: 67px;
  width: 52px;
  height: 19px;
  justify-content: flex-start;
  padding-left: 5px;
  border: 1px solid #a4a2ab;
  border-radius: 4px;
  background: #8b8992;
  color: #4c4a52;
  font-family: "Liberation Sans", sans-serif;
  font-size: 12px;
}

.navbar {
  position: absolute;
  top: 233px;
  right: 3px;
  border-radius: 3px;
  background: #3d3d3d;
}

.navbar svg {
  width: 34px;
  height: 232px;
}

.command {
  position: absolute;
  bottom: 0;
  left: 449px;
  width: 958px;
  display: flex;
  flex-direction: column;
  align-items: flex-start;
  gap: 5px;
}

.command output {
  margin-left: 73px;
  padding: 0 3px;
  border-radius: 2px;
  background: #3f3f3f;
  color: #a5a5a5;
  font-family: "Liberation Mono", "Noto Sans CJK SC", monospace;
  font-size: 14px;
}

.command output + output {
  background: #4d4d4d;
  color: #d4d4d4;
}

.command-row {
  display: flex;
  align-items: center;
  width: 100%;
  height: 27px;
  background: #20262d;
}

.grip {
  height: 20px;
  margin: 0 8px;
  border-left: 2px dotted #777;
}

.cx {
  width: 11px;
  height: 11px;
  margin-right: 13px;
}

.wrench {
  width: 18px;
  height: 18px;
  margin-right: 5px;
}

.command-box {
  display: flex;
  align-items: center;
  gap: 8px;
  flex: 1;
  align-self: stretch;
  padding: 0 5px 0 4px;
  background: #b2b2b2;
}

.command-box svg:first-child {
  width: 30px;
  height: 18px;
}

.command-box input {
  flex: 1;
  font-style: italic;
  font-size: 15px;
}

.command-box input::placeholder {
  color: #666;
}

/* 右侧停靠工具栏 */
.dock {
  display: flex;
  gap: 4px;
  width: 65px;
  padding: 6px 2px 0 4px;
}

.tools {
  display: flex;
  flex-direction: column;
  align-items: center;
  gap: 6px;
  width: 27px;
  padding: 2px 0;
  background: #2b333f;
}

.tools svg {
  width: 19px;
  height: 19px;
}

.tools hr {
  width: 23px;
  height: 2px;
  margin: -2px 0 -1px;
  border: 0;
  background: #9aa1a9;
}

.first {
  align-self: flex-start;
}

.second {
  align-self: flex-end;
}

.handle {
  width: 16px;
  height: 4px;
  background: #8b929a;
}

/* 状态栏 */
.statusbar {
  display: flex;
  justify-content: space-between;
  height: 40px;
  border-top: 5px solid #3b4550;
  border-bottom: 2px solid #383e42;
  background: #212932;
}

.layouts {
  display: flex;
  align-items: flex-start;
  padding-left: 19px;
  color: #ced1d4;
  font-size: 14px;
}

.layouts button,
.layouts .slash {
  height: 27px;
}

.layouts .slash {
  height: 20px;
  margin: 4px 13px 0;
}

.layouts .model {
  width: 66px;
  margin: 0 7px 0 10px;
  background: #3a4551;
  clip-path: polygon(12px 0, 100% 0, 54px 100%, 0 100%);
  color: #fff;
  font-weight: 700;
}

.layouts .add {
  margin: 0 4px;
}

.toggles {
  display: flex;
  align-items: center;
  gap: 4px;
  padding-right: 2px;
}

.group {
  display: flex;
  height: 27px;
  background: #343d48;
}

.group button {
  width: 26px;
}

.group svg {
  width: 26px;
  height: 26px;
}

.group .label {
  width: 32px;
  color: #fff;
  font-weight: 700;
}

.group .on {
  background: #5b8ec1;
  border-right: 1px solid #79a5d0;
}

.group .more {
  width: 21px;
}

.group .more svg,
.scale svg {
  width: 8px;
  height: 8px;
}

.group .scale {
  width: 40px;
  gap: 6px;
  color: #fff;
}

/* 任务栏 */
.taskbar {
  display: grid;
  grid-template-columns: 1fr auto 1fr;
  align-items: center;
  height: 52px;
  padding-left: 11px;
  background: linear-gradient(90deg, #20211f, #202024 35%, #1f1f26 60%, #20211f);
  color: #e6e6e6;
}

.weather {
  gap: 8px;
  justify-self: start;
  margin-left: 12px;
  text-align: left;
}

.weather svg {
  width: 26px;
  height: 26px;
}

.weather small {
  display: block;
  color: #aaa;
  font-size: 13px;
}

.apps {
  display: flex;
  align-items: center;
  gap: 22px;
}

.apps button svg {
  width: 27px;
  height: 27px;
}

.task-search {
  display: flex;
  align-items: center;
  gap: 11px;
  width: 247px;
  height: 37px;
  margin: 0 -8px;
  padding: 0 8px 0 12px;
  border: 1px solid #505055;
  border-radius: 19px;
  background: #404045;
}

.lens {
  width: 18px;
  height: 18px;
}

.task-search input {
  flex: 1;
  font-size: 16px;
}

.task-search input::placeholder {
  color: #bbb;
}

.chef {
  width: 48px;
  height: 28px;
}

.apps .running {
  width: 45px;
  height: 45px;
  margin-left: -8px;
  border-radius: 5px;
  background: linear-gradient(#d8896c, #d8896c) center bottom 1px / 18px 4px no-repeat #2f2e35;
}

.running span {
  width: 25px;
  height: 29px;
  border-left: 2px solid #ef5d7c;
  border-radius: 3px;
  background: linear-gradient(#da1748 65%, #970c30 65%);
  color: #fff;
  font-size: 15px;
  font-weight: 700;
  line-height: 19px;
}

.running small {
  display: block;
  font-size: 7px;
  line-height: 8px;
}

.tray {
  display: flex;
  align-items: center;
  justify-content: flex-end;
  padding-right: 20px;
}

.tray svg {
  width: 20px;
  height: 20px;
}

.ime {
  margin: 0 26px 0 20px;
  font-size: 14px;
}

.q {
  width: 18px;
  height: 18px;
  border-radius: 3px;
  background: #2d7fe8;
  color: #fff;
  font-weight: 700;
}

.net {
  gap: 6px;
  margin: 0 18px 0 24px;
}

.tray .clock {
  margin-right: 8px;
  text-align: right;
}

/* 浮动窗口 */
.timer {
  position: fixed;
  top: 31px;
  right: 137px;
  width: 58px;
  height: 58px;
  border: 2px solid #e8f4fc;
  border-radius: 50%;
  background: linear-gradient(20deg, #58bdf8, #3a86f5);
  color: #fff;
  font-size: 14px;
  line-height: 56px;
  text-align: center;
}

.pen-badge {
  position: fixed;
  top: 34px;
  right: 0;
  display: grid;
  place-items: center;
  width: 38px;
  height: 38px;
  border-radius: 50%;
  background: #000;
}

.pen-badge svg {
  width: 23px;
  height: 28px;
}

.annotate {
  position: fixed;
  top: 79px;
  right: 0;
  width: 38px;
  padding: 2px;
  background: #fff;
}

.annotate button {
  position: relative;
  width: 34px;
  height: 34px;
}

.annotate svg {
  width: 28px;
  height: 28px;
}

.annotate .picked {
  background: #36bce8;
}

.sub::after {
  content: "";
  position: absolute;
  right: 0;
  bottom: 0;
  border: 4px solid;
  border-color: transparent #111 #111 transparent;
}

.dot::before {
  content: "";
  position: absolute;
  top: 2px;
  right: 0;
  width: 9px;
  height: 9px;
  border-radius: 50%;
  background: #f0127f;
}

.swatches {
  display: grid;
  grid-template: 16px 17px 34px / 1fr 1fr;
  background: #ff0f87;
}

.cyan { background: #00aeef; }
.yellow { background: #fff200; }
.black { grid-column: 2; background: #000; }
```
